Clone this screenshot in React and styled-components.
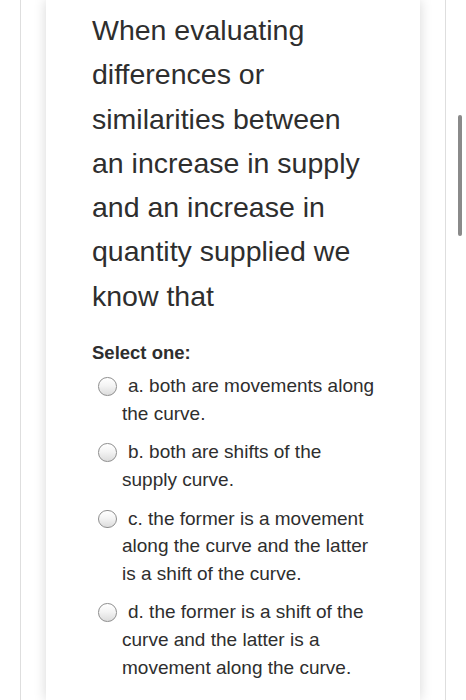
import React from "react";
import styled, { createGlobalStyle } from "styled-components";

const Global = createGlobalStyle`
  html, body {
    margin: 0;
    padding: 0;
    background: #ffffff;
  }
  body {
    font-family: "Liberation Sans", Arial, sans-serif;
    color: #2e2e2e;
    overflow: hidden;
  }
`;

const Frame = styled.div`
  box-sizing: border-box;
  margin-left: 20px;
  width: 426px;
  height: 100vh;
  border-left: 1px solid #dedede;
  border-right: 1px solid #dedede;
  padding: 0 24px 0 25px;
`;

const Card = styled.div`
  box-sizing: border-box;
  width: 374px;
  height: 100%;
  background: #ffffff;
  box-shadow: 0 0 12px rgba(0, 0, 0, 0.16);
  padding: 8px 42px 0 46px;
`;

const Question = styled.div`
  font-size: 28.5px;
  line-height: 44.25px;
  color: #2e2e2e;
  width: 286px;
`;

const Prompt = styled.div`
  margin-top: 23px;
  font-size: 18.5px;
  line-height: 24px;
  font-weight: 700;
  color: #2e2e2e;
`;

const OptionList = styled.div`
  margin-top: 7.5px;
  padding-left: 6px;
  width: 280px;
  display: flex;
  flex-direction: column;
  gap: 11px;
`;

const Option = styled.label`
  display: block;
  padding-left: 24px;
  font-size: 19px;
  line-height: 27.6px;
  color: #2e2e2e;
`;

const Radio = styled.span`
  display: inline-block;
  box-sizing: border-box;
  width: 18.5px;
  height: 18.5px;
  margin-left: -24px;
  margin-right: 11.5px;
  border-radius: 50%;
  border: 1px solid #8f8f8f;
  background: linear-gradient(180deg, #ffffff 0%, #f4f4f4 45%, #dcdcdc 100%);
  vertical-align: -3.5px;
`;

const ScrollIndicator = styled.div`
  position: fixed;
  left: 458px;
  top: 115px;
  width: 4px;
  height: 121px;
  border-radius: 2px;
  background: #8a8a8a;
`;

const options = [
  "a. both are movements along the curve.",
  "b. both are shifts of the supply curve.",
  "c. the former is a movement along the curve and the latter is a shift of the curve.",
  "d. the former is a shift of the curve and the latter is a movement along the curve.",
];

export default function App() {
  return (
    <>
      <Global />
      <Frame>
        <Card>
          <Question>
            When evaluating differences or similarities between an increase in
            supply and an increase in quantity supplied we know that
          </Question>
          <Prompt>Select one:</Prompt>
          <OptionList>
            {options.map((o) => (
              <Option key={o}>
                <Radio />
                {o}
              </Option>
            ))}
          </OptionList>
        </Card>
      </Frame>
      <ScrollIndicator />
    </>
  );
}
